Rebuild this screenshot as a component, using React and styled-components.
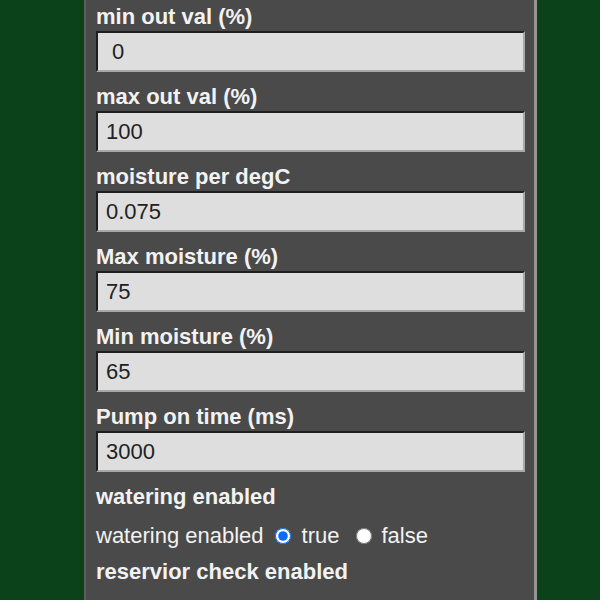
import React from "react";
import styled, { createGlobalStyle } from "styled-components";

const Global = createGlobalStyle`
  html, body { margin: 0; padding: 0; background: #0b4219; }
  body { font-family: "Liberation Sans", Arial, sans-serif; }
`;

const Page = styled.div`
  display: flex;
  padding-left: 84px;
  height: 600px;
  overflow: hidden;
`;

const Panel = styled.form`
  width: 453px;
  box-sizing: border-box;
  background: #4a4a4a;
  border-left: 2px solid #5e5e5e;
  border-right: 3px solid #959595;
  padding: 4px 10px 0 10px;
  color: #f2f2f2;
  font-size: 22px;
`;

const Field = styled.div`
  display: flex;
  flex-direction: column;
  gap: 2px;
  margin-bottom: 12px;
`;

const Label = styled.label`
  font-weight: bold;
  line-height: 25px;
  display: block;
`;

const Input = styled.input`
  box-sizing: border-box;
  width: 429px;
  height: 41px;
  margin: 0;
  padding: 0 8px;
  font-family: "Liberation Sans", Arial, sans-serif;
  font-size: 22px;
  color: #222;
  background: #dedede;
  border-style: solid;
  border-width: 2px;
  border-color: #1e1e1e #a8a8a8 #a8a8a8 #1e1e1e;
  outline: none;
`;

const Heading = styled.div`
  font-weight: bold;
  line-height: 25px;
`;

const RadioRow = styled.div`
  display: flex;
  align-items: center;
  line-height: 25px;
  margin: 14px 0 11px;
`;

const Radio = styled.input`
  width: 16px;
  height: 16px;
  margin: 0 ${(p) => p.$after}px 0 ${(p) => p.$before}px;
  accent-color: #0a6cff;
`;

const fields = [
  ["min out val (%)", " 0"],
  ["max out val (%)", "100"],
  ["moisture per degC", "0.075"],
  ["Max moisture (%)", "75"],
  ["Min moisture (%)", "65"],
  ["Pump on time (ms)", "3000"],
];

export default function App() {
  return (
    <>
      <Global />
      <Page>
        <Panel onSubmit={(e) => e.preventDefault()}>
          {fields.map(([l, v]) => (
            <Field key={l}>
              <Label>{l}</Label>
              <Input type="text" defaultValue={v} />
            </Field>
          ))}
          <Heading>watering enabled</Heading>
          <RadioRow>
            <span>watering enabled</span>
            <Radio type="radio" name="we" defaultChecked $before={11} $after={11} />
            <span>true</span>
            <Radio type="radio" name="we" $before={16} $after={10} />
            <span>false</span>
          </RadioRow>
          <Heading>reservior check enabled</Heading>
        </Panel>
      </Page>
    </>
  );
}
